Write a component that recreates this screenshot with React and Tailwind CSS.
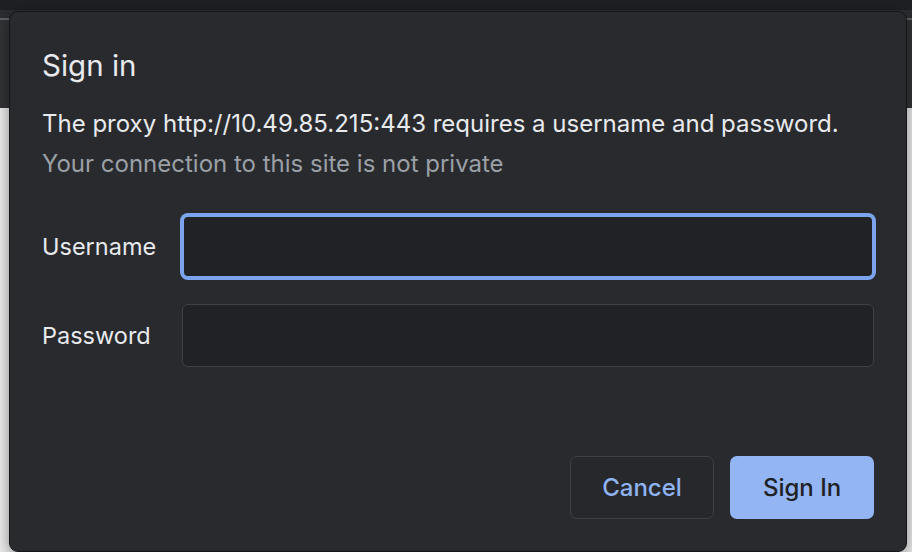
export default function App() {
  return (
    <div className="relative w-[912px] h-[552px] overflow-hidden bg-[#ededed] font-['Inter',sans-serif]">
      {/* browser chrome behind the dialog */}
      <div className="h-[10px] bg-[#1f2023]" />
      <div className="h-[8px] bg-[#2c2d30]" />
      <div className="h-[2px] bg-[#606165]" />
      <div className="h-[88px] bg-[#333437]" />
      <div className="h-[444px] bg-[#eeeeee]" />

      <div className="absolute left-[9px] top-[11px] w-[898px] h-[541px] rounded-[9px] border border-[#151618] bg-[#292a2e] px-[32px] shadow-[0_4px_16px_rgba(0,0,0,0.45)] flex flex-col">
        <h1 className="mt-[36px] text-[29.5px] leading-[34px] text-[#e8eaed] font-normal">Sign in</h1>
        <p className="mt-[26px] text-[24px] leading-[32px] text-[#e8eaed]">
          The proxy http://10.49.85.215:443 requires a username and password.
        </p>
        <p className="mt-[8px] text-[24px] leading-[32px] text-[#9aa0a6]">
          Your connection to this site is not private
        </p>

        <div className="mt-[35px] grid grid-cols-[140px_1fr] gap-y-[26px] items-center">
          <label className="text-[23.5px] text-[#e8eaed]">Username</label>
          <div className="h-[63px] rounded-[6px] border-2 border-[#7ca4ee] bg-[#212226] shadow-[0_0_0_2px_#7ca4ee]" />
          <label className="text-[23.5px] text-[#e8eaed]">Password</label>
          <div className="h-[63px] rounded-[6px] border border-[#3f4044] bg-[#212226]" />
        </div>

        <div className="mt-[89px] flex justify-end gap-[16px]">
          <button className="w-[144px] h-[63px] rounded-[7px] border border-[#3f4044] bg-[#27282c] text-[24px] font-medium text-[#8fb3f2]">
            Cancel
          </button>
          <button className="w-[144px] h-[63px] rounded-[7px] bg-[#93b5f3] text-[24px] font-medium text-[#202124]">
            Sign In
          </button>
        </div>
      </div>
    </div>
  );
}
